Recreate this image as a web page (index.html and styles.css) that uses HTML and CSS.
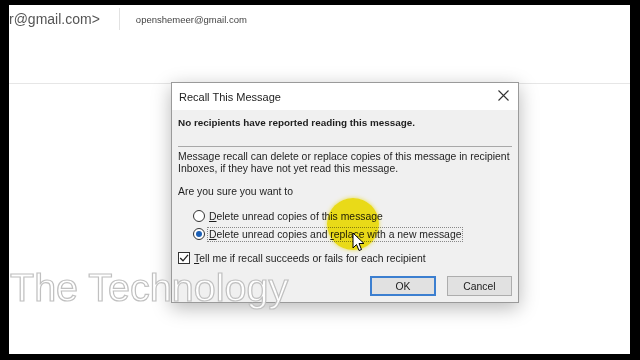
FILE: index.html
```html
<!DOCTYPE html>
<html lang="en">
<head>
  <meta charset="UTF-8" />
  <title>Recall This Message</title>
  <link rel="stylesheet" href="styles.css">
</head>
<body>
  <div class="screen">
    <div class="mail-header">
      <span class="from-text">r@gmail.com&gt;</span>
      <span class="divider"></span>
      <span class="to-text">openshemeer@gmail.com</span>
    </div>

    <div class="dialog">
      <div class="dialog-title">
        <span>Recall This Message</span>
        <svg class="close-icon" width="11" height="11" viewBox="0 0 11 11">
          <path d="M0.5 0.5 L10.5 10.5 M10.5 0.5 L0.5 10.5" stroke="#333" stroke-width="1.1" fill="none"/>
        </svg>
      </div>
      <div class="dialog-body">
        <p class="status">No recipients have reported reading this message.</p>
        <div class="sep"></div>
        <p class="info">Message recall can delete or replace copies of this message in recipient<br>Inboxes, if they have not yet read this message.</p>
        <p class="ask">Are you sure you want to</p>
        <div class="options">
          <div class="option">
            <span class="radio"></span>
            <span class="label"><u>D</u>elete unread copies of this message</span>
          </div>
          <div class="option">
            <span class="radio checked"></span>
            <span class="label focused"><u>D</u>elete unread copies and <u>r</u>eplace with a new message</span>
          </div>
        </div>
        <div class="check-row">
          <span class="checkbox">
            <svg width="10" height="10" viewBox="0 0 10 10"><path d="M1.2 5 L4 7.8 L9 1.8" stroke="#222" stroke-width="1.3" fill="none"/></svg>
          </span>
          <span><u>T</u>ell me if recall succeeds or fails for each recipient</span>
        </div>
        <div class="buttons">
          <button class="btn default">OK</button>
          <button class="btn">Cancel</button>
        </div>
      </div>
    </div>

    <div class="highlight"></div>
    <svg class="cursor" width="14" height="20" viewBox="0 0 14 20">
      <path d="M1 1 L1 16 L4.5 12.5 L7 18.5 L9.5 17.5 L7 11.5 L12 11.5 Z" fill="#fff" stroke="#000" stroke-width="1"/>
    </svg>

    <div class="watermark">The Technology</div>
  </div>
</body>
</html>
```

FILE: styles.css
```css
body {
  margin: 0;
  width: 640px;
  height: 360px;
  background-color: #000;
  overflow: hidden;
  font-family: "Liberation Sans", Arial, sans-serif;
}
.screen {
  position: relative;
  margin: 5px 10px 0 9px;
  height: 349px;
  background-color: #fff;
  overflow: hidden;
}
.mail-header {
  height: 78px;
  border-bottom: 1px solid #e6e6e6;
  display: flex;
  align-items: flex-start;
}
.mail-header span {
  height: 28px;
  display: flex;
  align-items: center;
}
.from-text {
  font-size: 14px;
  color: #555;
}
.divider {
  width: 1px;
  height: 22px !important;
  margin: 3px 16px 0 19px;
  background-color: #e2e2e2;
}
.to-text {
  font-size: 9.5px;
  color: #444;
}

.dialog {
  position: absolute;
  left: 162px;
  top: 77px;
  width: 348px;
  box-sizing: border-box;
  border: 1px solid #9a9a9a;
  background-color: #f0f0f0;
  box-shadow: 0 5px 18px rgba(0, 0, 0, 0.28);
  font-size: 10.4px;
  color: #1e1e1e;
}
.dialog-title {
  height: 27px;
  background-color: #fff;
  display: flex;
  align-items: center;
  justify-content: space-between;
  padding: 0 9px 0 7px;
  font-size: 11px;
  color: #222;
}
.close-icon {
  margin-top: -2px;
}
.dialog-body {
  padding: 0 6px 6px 6px;
}
.dialog-body p {
  margin: 0;
}
.status {
  padding-top: 6px;
  line-height: 14px;
  font-weight: bold;
  font-size: 9.9px;
}
.sep {
  height: 1px;
  background-color: #a8a8a8;
  margin-top: 16px;
}
.info {
  margin-top: 4px !important;
  line-height: 12px;
}
.ask {
  margin-top: 10px !important;
  line-height: 14px;
}
.options {
  margin-top: 8px;
  padding-left: 15px;
}
.option {
  height: 18px;
  display: flex;
  align-items: center;
}
.radio {
  width: 10px;
  height: 10px;
  border: 1px solid #333;
  border-radius: 50%;
  background-color: #fff;
  margin-right: 2px;
  position: relative;
}
.radio.checked::after {
  content: "";
  position: absolute;
  left: 2px;
  top: 2px;
  width: 6px;
  height: 6px;
  border-radius: 50%;
  background-color: #1b5fb5;
}
.label {
  padding: 1px 1px;
  border: 1px dotted transparent;
}
.label.focused {
  border-color: #888;
}
.check-row {
  margin-top: 8px;
  height: 14px;
  display: flex;
  align-items: center;
  gap: 4px;
}
.checkbox {
  width: 10px;
  height: 10px;
  border: 1px solid #333;
  background-color: #fff;
  display: flex;
  align-items: center;
  justify-content: center;
}
.buttons {
  margin-top: 11px;
  display: flex;
  justify-content: flex-end;
  gap: 11px;
}
.btn {
  width: 65px;
  height: 20px;
  font-family: inherit;
  font-size: 10.4px;
  color: #222;
  background-color: #e1e1e1;
  border: 1px solid #adadad;
  padding: 0;
}
.btn.default {
  width: 66px;
  border: 2px solid #3c7fd0;
}

.highlight {
  position: absolute;
  left: 318px;
  top: 193px;
  width: 52px;
  height: 52px;
  border-radius: 50%;
  background-color: rgba(247, 230, 0, 0.9);
  box-shadow: 0 0 4px rgba(247, 230, 0, 0.7);
  mix-blend-mode: multiply;
}
.cursor {
  position: absolute;
  left: 343px;
  top: 227px;
}
.watermark {
  position: absolute;
  left: 1px;
  top: 262px;
  font-size: 39.5px;
  line-height: 40px;
  color: rgba(255, 255, 255, 0.9);
  -webkit-text-stroke: 1.2px #c0c0c0;
  white-space: nowrap;
}
```
